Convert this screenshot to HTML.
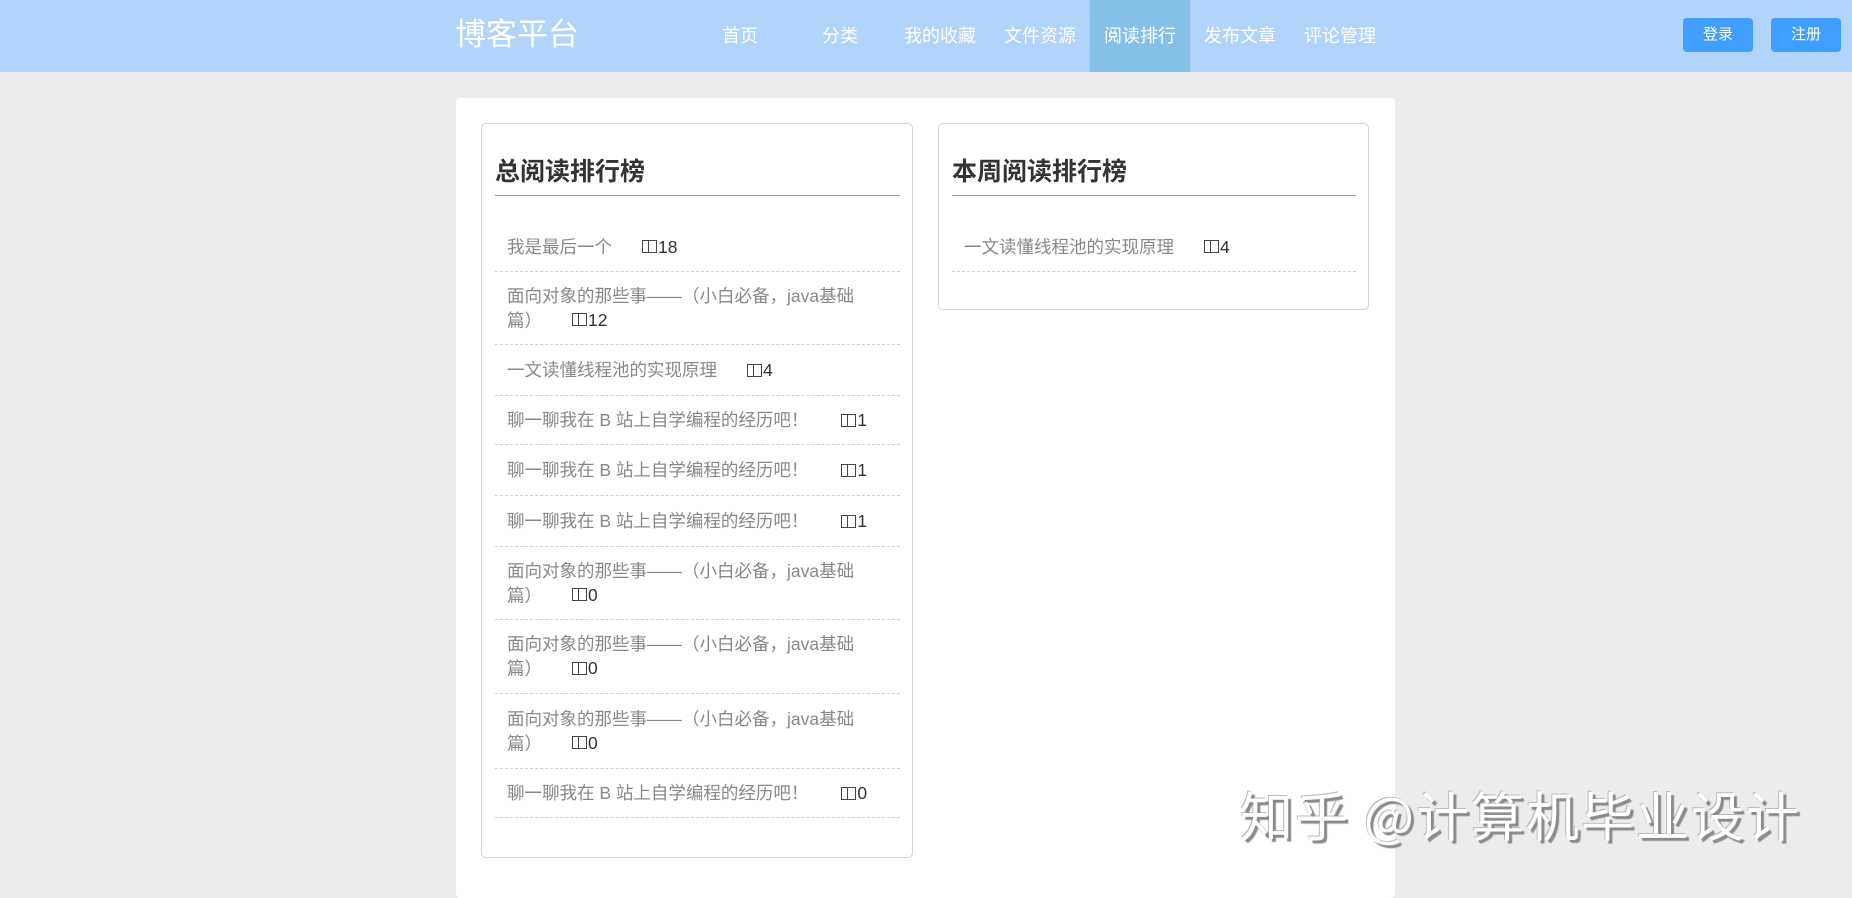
<!DOCTYPE html>
<html><head><meta charset="utf-8"><style>
*{margin:0;padding:0;box-sizing:border-box}
body{width:1852px;height:888px;background:#ececec;font-family:"Liberation Sans","Noto Sans CJK SC",sans-serif;position:relative;overflow:hidden}
.hd{position:absolute;left:0;top:0;width:1852px;height:72px;background:#b1d4fa}
.logo{position:absolute;left:455px;top:14px;font-size:31px;color:#fff;line-height:42px}
.nav{position:absolute;left:690px;top:0;height:72px;display:flex}
.nav div{width:100px;text-align:center;line-height:72px;color:#fff;font-size:18px}
.nav .on{background:#85c0e9}
.btn{position:absolute;top:18px;width:70px;height:34px;background:#409eff;color:#fff;border-radius:4px;font-size:15px;text-align:center;line-height:34px}
.card{position:absolute;left:456px;top:98px;width:939px;height:800px;background:#fff;border-radius:4px}
.pn{position:absolute;border:1px solid #d3d3d3;border-radius:5px;background:#fff}
.tt{position:absolute;left:13px;top:28px;font-size:25px;font-weight:bold;color:#333}
.ul{position:absolute;left:13px;right:12px;top:71px;border-top:1px solid #7ea6c4}
.list{position:absolute;left:13px;right:12px;top:98px}
.it{border-bottom:1px dashed #d0d0d0;display:flex;align-items:center;padding-left:12px;font-size:17.5px;line-height:24px;white-space:nowrap}
.t{color:#888}
.c{color:#333;margin-left:30px;display:inline-flex;align-items:center}
.bk{display:inline-block;width:15px;height:13px;border:1.3px solid #444;position:relative;margin-right:1px}
.bk:after{content:"";position:absolute;left:5px;top:0;height:100%;border-left:1.3px solid #444}
.wm{position:absolute;left:1240px;top:776px;font-size:53px;color:#fff;text-shadow:3px 3px 1px #8a8a8a,-1px -1px 0 #bbb;letter-spacing:2px;font-family:"Noto Sans CJK SC",sans-serif}
</style></head><body>
<div class="hd">
<div class="logo">博客平台</div>
<div class="nav"><div>首页</div><div>分类</div><div>我的收藏</div><div>文件资源</div><div class="on">阅读排行</div><div>发布文章</div><div>评论管理</div></div>
<div class="btn" style="left:1683px">登录</div>
<div class="btn" style="left:1771px">注册</div>
</div>
<div class="card"></div>
<div class="pn" style="left:481px;top:123px;width:432px;height:735px">
<div class="tt">总阅读排行榜</div><div class="ul"></div>
<div class="list">
<div class="it" style="height:50px"><span class="t">我是最后一个</span><span class="c"><i class="bk"></i>18</span></div>
<div class="it" style="height:73px"><span class="t">面向对象的那些事——（小白必备，java基础<br>篇）<span class="c"><i class="bk"></i>12</span></span></div>
<div class="it" style="height:51px"><span class="t">一文读懂线程池的实现原理</span><span class="c"><i class="bk"></i>4</span></div>
<div class="it" style="height:49px"><span class="t">聊一聊我在 B 站上自学编程的经历吧！</span><span class="c" style="margin-left:33px"><i class="bk"></i>1</span></div>
<div class="it" style="height:51px"><span class="t">聊一聊我在 B 站上自学编程的经历吧！</span><span class="c" style="margin-left:33px"><i class="bk"></i>1</span></div>
<div class="it" style="height:51px"><span class="t">聊一聊我在 B 站上自学编程的经历吧！</span><span class="c" style="margin-left:33px"><i class="bk"></i>1</span></div>
<div class="it" style="height:73px"><span class="t">面向对象的那些事——（小白必备，java基础<br>篇）<span class="c"><i class="bk"></i>0</span></span></div>
<div class="it" style="height:74px"><span class="t">面向对象的那些事——（小白必备，java基础<br>篇）<span class="c"><i class="bk"></i>0</span></span></div>
<div class="it" style="height:75px"><span class="t">面向对象的那些事——（小白必备，java基础<br>篇）<span class="c"><i class="bk"></i>0</span></span></div>
<div class="it" style="height:49px"><span class="t">聊一聊我在 B 站上自学编程的经历吧！</span><span class="c" style="margin-left:33px"><i class="bk"></i>0</span></div>
</div></div>
<div class="pn" style="left:938px;top:123px;width:431px;height:187px">
<div class="tt">本周阅读排行榜</div><div class="ul"></div>
<div class="list">
<div class="it" style="height:50px"><span class="t">一文读懂线程池的实现原理</span><span class="c"><i class="bk"></i>4</span></div>
</div></div>
<div class="wm">知乎 @计算机毕业设计</div>
</body></html>
